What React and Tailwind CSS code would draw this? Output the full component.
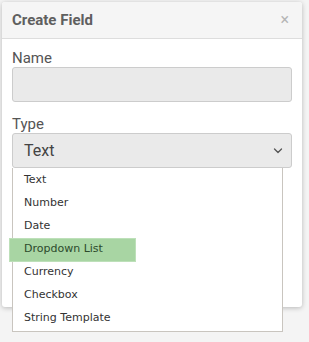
import React, { useState } from 'react';

const options = ['Text', 'Number', 'Date', 'Dropdown List', 'Currency', 'Checkbox', 'String Template'];

const Chevron = () => (
    <svg width="10" height="6" viewBox="0 0 10 6" fill="none">
        <path d="M1.5 1l3.5 3.5 3.5-3.5" stroke="#555" strokeWidth="1.3" strokeLinecap="round" strokeLinejoin="round" />
    </svg>
);

export default function App() {
    const [hovered] = useState('Dropdown List');

    return (
        <div className="w-[309px] h-[342px] bg-[#f4f4f4] pt-[2px] pl-[2px] font-['Roboto',sans-serif]">
            <div className="relative w-[300px] h-[305px] bg-white rounded-[3px] shadow-[0_1px_5px_rgba(0,0,0,0.25)]">
                {/* header */}
                <div className="h-[37px] flex items-center justify-between pl-[10px] pr-[13px] bg-[#f5f5f5] border-b border-[#dddddd] rounded-t-[3px]">
                    <span className="text-[15px] font-bold text-[#5f5f5f]">Create Field</span>
                    <span className="text-[16px] text-[#b5b5b5] leading-none">×</span>
                </div>

                <div className="px-[10px] pt-[10px]">
                    <div className="text-[15px] text-[#555] leading-[18px]">Name</div>
                    <div className="mt-[0px] h-[35px] bg-[#eaeaea] border border-[#cccccc] rounded-[3px]" />

                    <div className="mt-[13px] text-[15px] text-[#555] leading-[18px]">Type</div>
                    <div className="mt-[0px] h-[35px] bg-[#eaeaea] border border-[#cccccc] rounded-[3px] flex items-center justify-between pl-[11px] pr-[8px]">
                        <span className="text-[16px] text-[#444]">Text</span>
                        <Chevron />
                    </div>
                </div>

                {/* open list */}
                <div className="absolute left-[10px] top-[166px] w-[271px] bg-white border border-[#c9c5bf] border-t-0 py-[1px] font-['DejaVu_Sans',sans-serif] text-[11px] text-[#333]">
                    {options.map((o) => (
                        <div key={o} className="relative h-[23px] flex items-center pl-[11px]">
                            {o === hovered && (
                                <div className="absolute left-[-4px] top-0 w-[127px] h-[24px] bg-[#a8d5a3] border border-[#bde0b9]" />
                            )}
                            <span className={`relative ${o === hovered ? 'text-[#2c4a2c]' : ''}`}>{o}</span>
                        </div>
                    ))}
                </div>
            </div>
        </div>
    );
}
